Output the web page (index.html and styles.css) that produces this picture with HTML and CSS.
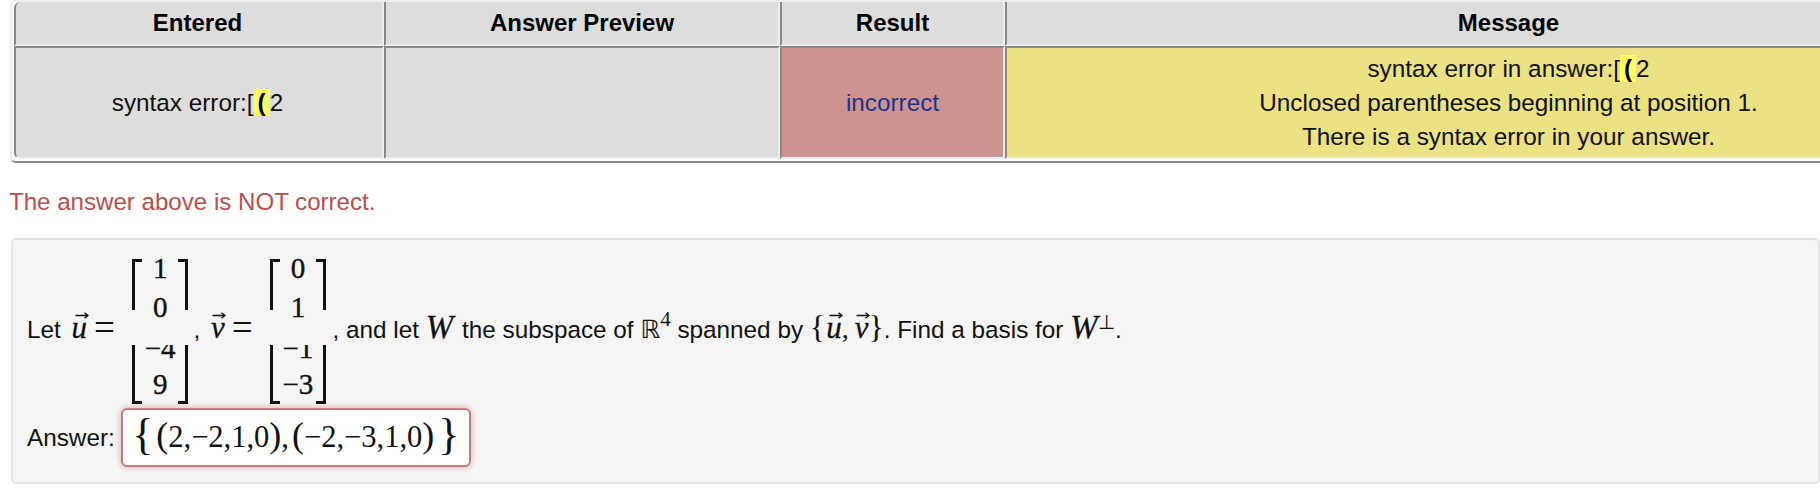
FILE: index.html
```html
<!DOCTYPE html>
<html lang="en">
<head>
<meta charset="utf-8">
<title>Answer results</title>
<link rel="stylesheet" href="styles.css">
</head>
<body>
<table class="results">
  <colgroup><col class="c1"><col class="c2"><col class="c3"><col class="c4"></colgroup>
  <thead>
    <tr><th class="first">Entered</th><th>Answer Preview</th><th>Result</th><th>Message</th></tr>
  </thead>
  <tbody>
    <tr>
      <td class="first-body">syntax error:[<span class="hl">(</span>2</td>
      <td></td>
      <td class="bad">incorrect</td>
      <td class="msg">syntax error in answer:[<span class="hl">(</span>2<br>Unclosed parentheses beginning at position 1.<br>There is a syntax error in your answer.</td>
    </tr>
  </tbody>
</table>
<p class="notice">The answer above is NOT correct.</p>
<section class="problem">
  <div class="statement">Let <span class="mi vec lead">u<svg class="arrow" viewBox="0 0 14 7"><path d="M0.5 3.5H12.5M9.5 0.8L13 3.5L9.5 6.2"/></svg></span><span class="mo">=</span><span class="matrix"><span class="m-top"><span class="num">1</span><span class="num">0</span></span><span class="m-bottom"><span class="num">−4</span><span class="num">9</span></span></span><span class="comma">,</span><span class="mi vec v">v<svg class="arrow" viewBox="0 0 14 7"><path d="M0.5 3.5H12.5M9.5 0.8L13 3.5L9.5 6.2"/></svg></span><span class="mo">=</span><span class="matrix"><span class="m-top"><span class="num">0</span><span class="num">1</span></span><span class="m-bottom"><span class="num">−1</span><span class="num">−3</span></span></span><span class="tail">, and let <span class="mi big w1">W</span> the subspace of <span class="dbl">ℝ</span><sup class="sup">4</sup> spanned by <span class="set">{<span class="mi vec">u<svg class="arrow" viewBox="0 0 14 7"><path d="M0.5 3.5H12.5M9.5 0.8L13 3.5L9.5 6.2"/></svg></span><span class="mcomma">,</span><span class="mi vec v">v<svg class="arrow" viewBox="0 0 14 7"><path d="M0.5 3.5H12.5M9.5 0.8L13 3.5L9.5 6.2"/></svg></span>}</span>. Find a basis for <span class="mi big">W</span><sup class="perp">⊥</sup>.</span></div>
  <div class="answer">Answer: <span class="input"><span class="brace l">{</span><span class="paren">(</span>2,−2,1,0<span class="paren">)</span><span class="sep">,</span><span class="paren">(</span>−2,−3,1,0<span class="paren">)</span><span class="brace r">}</span></span></div>
</section>
</body>
</html>
```
FILE: styles.css
```css
html, body { margin: 0; padding: 0; height: 502px; overflow: hidden; background: #fff; }
body { font-family: "Liberation Sans", Arial, sans-serif; font-size: 24.3px; color: #111; }

.results {
  display: table; box-sizing: border-box; table-layout: fixed; border-collapse: separate; border-spacing: 0;
  width: 2004px; margin: 0 0 0 10px; padding: 0 2px 2px 2px;
  border: 2px solid #888; border-top-color: #eee; border-left-color: #eee;
  border-top-left-radius: 6px; border-bottom-left-radius: 6px;
}
.c1 { width: 370px; } .c2 { width: 396px; } .c3 { width: 225px; } .c4 { width: 1007px; }
.results th, .results td {
  background: #ddd; text-align: center; padding: 0;
  border-left: 2px solid #888; border-right: 2px solid #eee; border-bottom: 2px solid #eee;
}
.results th { height: 42px; font-size: 24px; font-weight: 700; color: #000; border-top: 0; }
.results td { height: 109px; line-height: 34px; border-top: 2px solid #888; vertical-align: middle; }
.results th.first { border-top-left-radius: 6px; padding-right: 3px; }
.results td.first-body { border-bottom-left-radius: 6px; padding-right: 3px; }
.results td.bad { background: #cc9391; color: #1b3489; }
.results td.msg { background: #ebe283; }
.hl { background: #ffff66; font-weight: 700; padding: 0 4px; color: #000; }

.notice { margin: 25px 0 0 9px; font-size: 24.1px; line-height: 28px; color: #b5504f; }

.problem {
  box-sizing: border-box; height: 246px; margin: 22px 0 0 11px; padding: 19px 0 0 14px;
  background: #f5f5f5; border: 2px solid #e5e5e5; border-radius: 5px; white-space: nowrap;
}
.statement { height: 150px; line-height: 32px; }
.mi { font-family: "Liberation Serif", serif; font-style: italic; font-size: 31px; -webkit-text-stroke: .3px #111; }
.big { font-size: 33px; }
.w1 { margin-right: 2px; }
.vec { position: relative; display: inline-block; margin-left: 1px; }
.lead { margin-left: 4px; }
.arrow { position: absolute; left: 3px; top: 0; width: 14px; height: 7px; fill: none; stroke: #111; stroke-width: 1.3; }
.v .arrow { left: 1px; }
.mo { font-family: "Liberation Serif", serif; font-size: 37px; line-height: 0; margin: 0 17.3px 0 7px; vertical-align: -2px; }
.matrix {
  display: inline-flex; flex-direction: column; align-items: stretch; width: 56px; vertical-align: middle;
  font-family: "Liberation Serif", serif; font-size: 29px; -webkit-text-stroke: .4px #111; text-align: center;
}
.num { display: block; height: 39px; line-height: 39px; }
.m-top, .m-bottom { position: relative; display: block; }
.m-top { height: 59px; }
.m-top .num:first-child { margin-top: -10px; }
.m-bottom { height: 59px; margin-top: 27px; overflow: hidden; }
.m-bottom .num:first-child { margin-top: -16px; }
.m-bottom .num + .num { margin-top: -3px; }
.m-top::before, .m-top::after, .m-bottom::before, .m-bottom::after {
  content: ""; position: absolute; width: 7px; border: 0 solid #111;
}
.m-top::before, .m-top::after { top: 0; height: 48px; border-top-width: 3px; }
.m-bottom::before, .m-bottom::after { bottom: 0; height: 56px; border-bottom-width: 3px; }
.m-top::before, .m-bottom::before { left: 0; border-left-width: 3px; }
.m-top::after, .m-bottom::after { right: 0; border-right-width: 3px; }
.comma { margin-left: 5.4px; margin-right: 9.6px; }
.tail { margin-left: 6.7px; }
.dbl { font-family: "DejaVu Sans", sans-serif; font-size: 25px; }
.sup { font-family: "Liberation Serif", serif; font-size: 21px; line-height: 0; vertical-align: 12px; }
.set { font-family: "Liberation Serif", serif; font-size: 32px; }
.mcomma { font-size: 28px; margin-right: 5px; }
.perp { font-family: "DejaVu Sans", sans-serif; font-size: 20px; line-height: 0; vertical-align: 9px; }

.answer { display: flex; align-items: center; gap: 6px; margin-top: -1px; }
.input {
  box-sizing: border-box; display: inline-flex; align-items: center; justify-content: center; width: 350px; height: 59px;
  background: #fff; border: 2px solid #c47c7a; border-radius: 6px; box-shadow: 0 0 6px rgba(185, 74, 72, .45);
  font-family: "Liberation Serif", serif; font-size: 30.5px; color: #111;
}
.paren { font-size: 36px; line-height: 1; margin-top: -5px; }
.sep { margin-right: 3px; }
.brace { font-size: 44px; line-height: 1; margin-top: -6px; }
.brace.l { margin-right: 3px; }
.brace.r { margin-left: 4px; }
```
